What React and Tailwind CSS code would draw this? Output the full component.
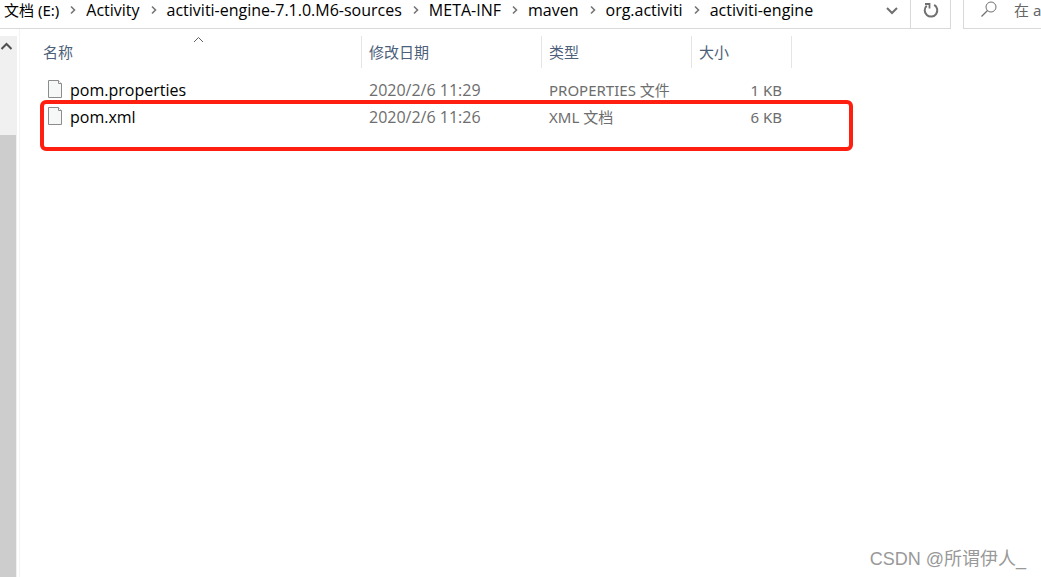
const crumbs = [
  '文档 (E:)',
  'Activity',
  'activiti-engine-7.1.0.M6-sources',
  'META-INF',
  'maven',
  'org.activiti',
  'activiti-engine',
];

const files = [
  { name: 'pom.properties', date: '2020/2/6 11:29', type: 'PROPERTIES 文件', size: '1 KB' },
  { name: 'pom.xml', date: '2020/2/6 11:26', type: 'XML 文档', size: '6 KB' },
];

const latin = "font-['Open_Sans','Noto_Sans_CJK_SC',sans-serif] text-base leading-5";

function Separator() {
  return (
    <svg className="mb-px h-3 w-[27px] shrink-0" viewBox="0 0 27 12" fill="none" aria-hidden="true">
      <path d="M12 2.5 15.5 6 12 9.5" stroke="#757575" strokeWidth="1.6" />
    </svg>
  );
}

function FileIcon() {
  return (
    <svg className="mb-0.5 h-5 w-4 shrink-0" viewBox="0 0 16 20" fill="none" aria-hidden="true">
      <path d="M1.5 1.5h10l3 3v14h-13z" fill="#f6f8f8" stroke="#8c8c8c" />
      <path d="M11.5 1.5v3h3" fill="#fff" stroke="#8c8c8c" />
    </svg>
  );
}

function AddressBar() {
  return (
    <header className="flex h-[29px] shrink-0 gap-3">
      <div className="flex min-w-0 flex-1 border-r border-b border-[#d9d9d9]">
        <nav aria-label="路径" className="flex min-w-0 flex-1 items-start overflow-hidden pl-1 text-black">
          {crumbs.map((crumb, i) => (
            <div key={crumb} className="flex shrink-0 items-center">
              {i > 0 && <Separator />}
              <button type="button" className={i === 0 ? 'whitespace-nowrap' : `whitespace-nowrap ${latin}`}>{crumb}</button>
            </div>
          ))}
        </nav>
        <button type="button" aria-label="以前的位置" className="flex w-9 items-start justify-center pt-1">
          <svg className="h-3 w-3" viewBox="0 0 12 12" fill="none">
            <path d="M1 4l5 5 5-5" stroke="#707070" strokeWidth="2" />
          </svg>
        </button>
        <button type="button" aria-label="刷新" className="flex w-10 items-start justify-center border-l border-[#d9d9d9] pt-0.5">
          <svg className="h-4 w-4" viewBox="0 0 16 16" fill="none">
            <path d="M11.2 2.9A6.300 6.300 0 1 1 3.700 3.700" stroke="#707070" strokeWidth="2" />
            <path d="M2 2h4.500v4.500" stroke="#707070" strokeWidth="1.800" />
          </svg>
        </button>
      </div>
      <label className="flex w-[78px] shrink-0 items-start overflow-hidden border-b border-l border-[#d9d9d9] pl-4">
        <svg className="mt-px h-4 w-[18px] shrink-0" viewBox="0 0 18 16" fill="none" aria-hidden="true">
          <circle cx="11" cy="6" r="5" stroke="#707070" />
          <path d="M7.500 9.500 1.500 15.500" stroke="#707070" strokeWidth="1.200" />
        </svg>
        <input
          type="text"
          aria-label="搜索"
          placeholder="在 a"
          className="ml-4 h-5 w-7 min-w-0 shrink-0 bg-transparent placeholder:text-[#666] outline-none"
        />
      </label>
    </header>
  );
}

function Scrollbar() {
  return (
    <div className="mt-[7px] flex w-[17px] shrink-0 flex-col bg-[#f0f0f0]">
      <button type="button" aria-label="向上滚动" className="flex h-[99px] items-start justify-start pt-1">
        <svg className="h-3 w-3" viewBox="0 0 12 12" fill="none">
          <path d="M1.500 9 6.500 4l5 5" stroke="#505050" strokeWidth="2" />
        </svg>
      </button>
      <div className="w-4 flex-1 bg-[#cdcdcd]" />
    </div>
  );
}

function FileTable() {
  const head = 'h-8 border-r border-[#e5e5e5] pl-[7px] text-left font-normal text-[#4c607a]';
  return (
    <div className="relative w-full max-w-[833px]">
      <table className="w-[772px] table-fixed border-separate border-spacing-0">
        <colgroup>
          <col className="w-[342px]" />
          <col className="w-[180px]" />
          <col className="w-[150px]" />
          <col className="w-[100px]" />
        </colgroup>
        <thead>
          <tr>
            <th scope="col" aria-sort="ascending" className="relative h-8 border-r border-[#e5e5e5] pl-[23px] text-left font-normal text-[#4c607a]">
              名称
              <svg className="absolute top-0 left-[173px] h-2 w-3" viewBox="0 0 12 8" fill="none" aria-hidden="true">
                <path d="M1 6l4.500-4.500L10 6" stroke="#606060" />
              </svg>
            </th>
            <th scope="col" className={head}>修改日期</th>
            <th scope="col" className={head}>类型</th>
            <th scope="col" className={head}>大小</th>
          </tr>
        </thead>
        <tbody className="text-[#6d6d6d] before:block before:h-2">
          {files.map((file) => (
            <tr key={file.name} className="h-[27px]">
              <td className={`pl-[27px] text-black ${latin}`}>
                <span className="flex items-center gap-[7px]">
                  <FileIcon />
                  {file.name}
                </span>
              </td>
              <td className={`pl-[7px] ${latin}`}>{file.date}</td>
              <td className="pl-[7px]">{file.type}</td>
              <td className="pr-[10px] text-right">{file.size}</td>
            </tr>
          ))}
        </tbody>
      </table>
      <div className="pointer-events-none absolute top-16 right-0 left-5 h-[51px] rounded-md border-4 border-[#ff1f10]" />
    </div>
  );
}

export default function App() {
  return (
    <div className="flex min-h-screen flex-col overflow-hidden bg-white font-['Noto_Sans','Noto_Sans_CJK_SC',sans-serif] text-[15px] leading-5">
      <AddressBar />
      <div className="flex flex-1">
        <Scrollbar />
        <main className="ml-0.5 flex min-w-0 flex-1 flex-col border-l border-[#f3f3f3] pt-[7px]">
          <FileTable />
          <footer className="mt-auto mr-[15px] self-end pb-2 font-['Liberation_Sans','Noto_Sans_CJK_SC',sans-serif] text-lg leading-5 text-[#999]">
            CSDN @所谓伊人_
          </footer>
        </main>
      </div>
    </div>
  );
}
